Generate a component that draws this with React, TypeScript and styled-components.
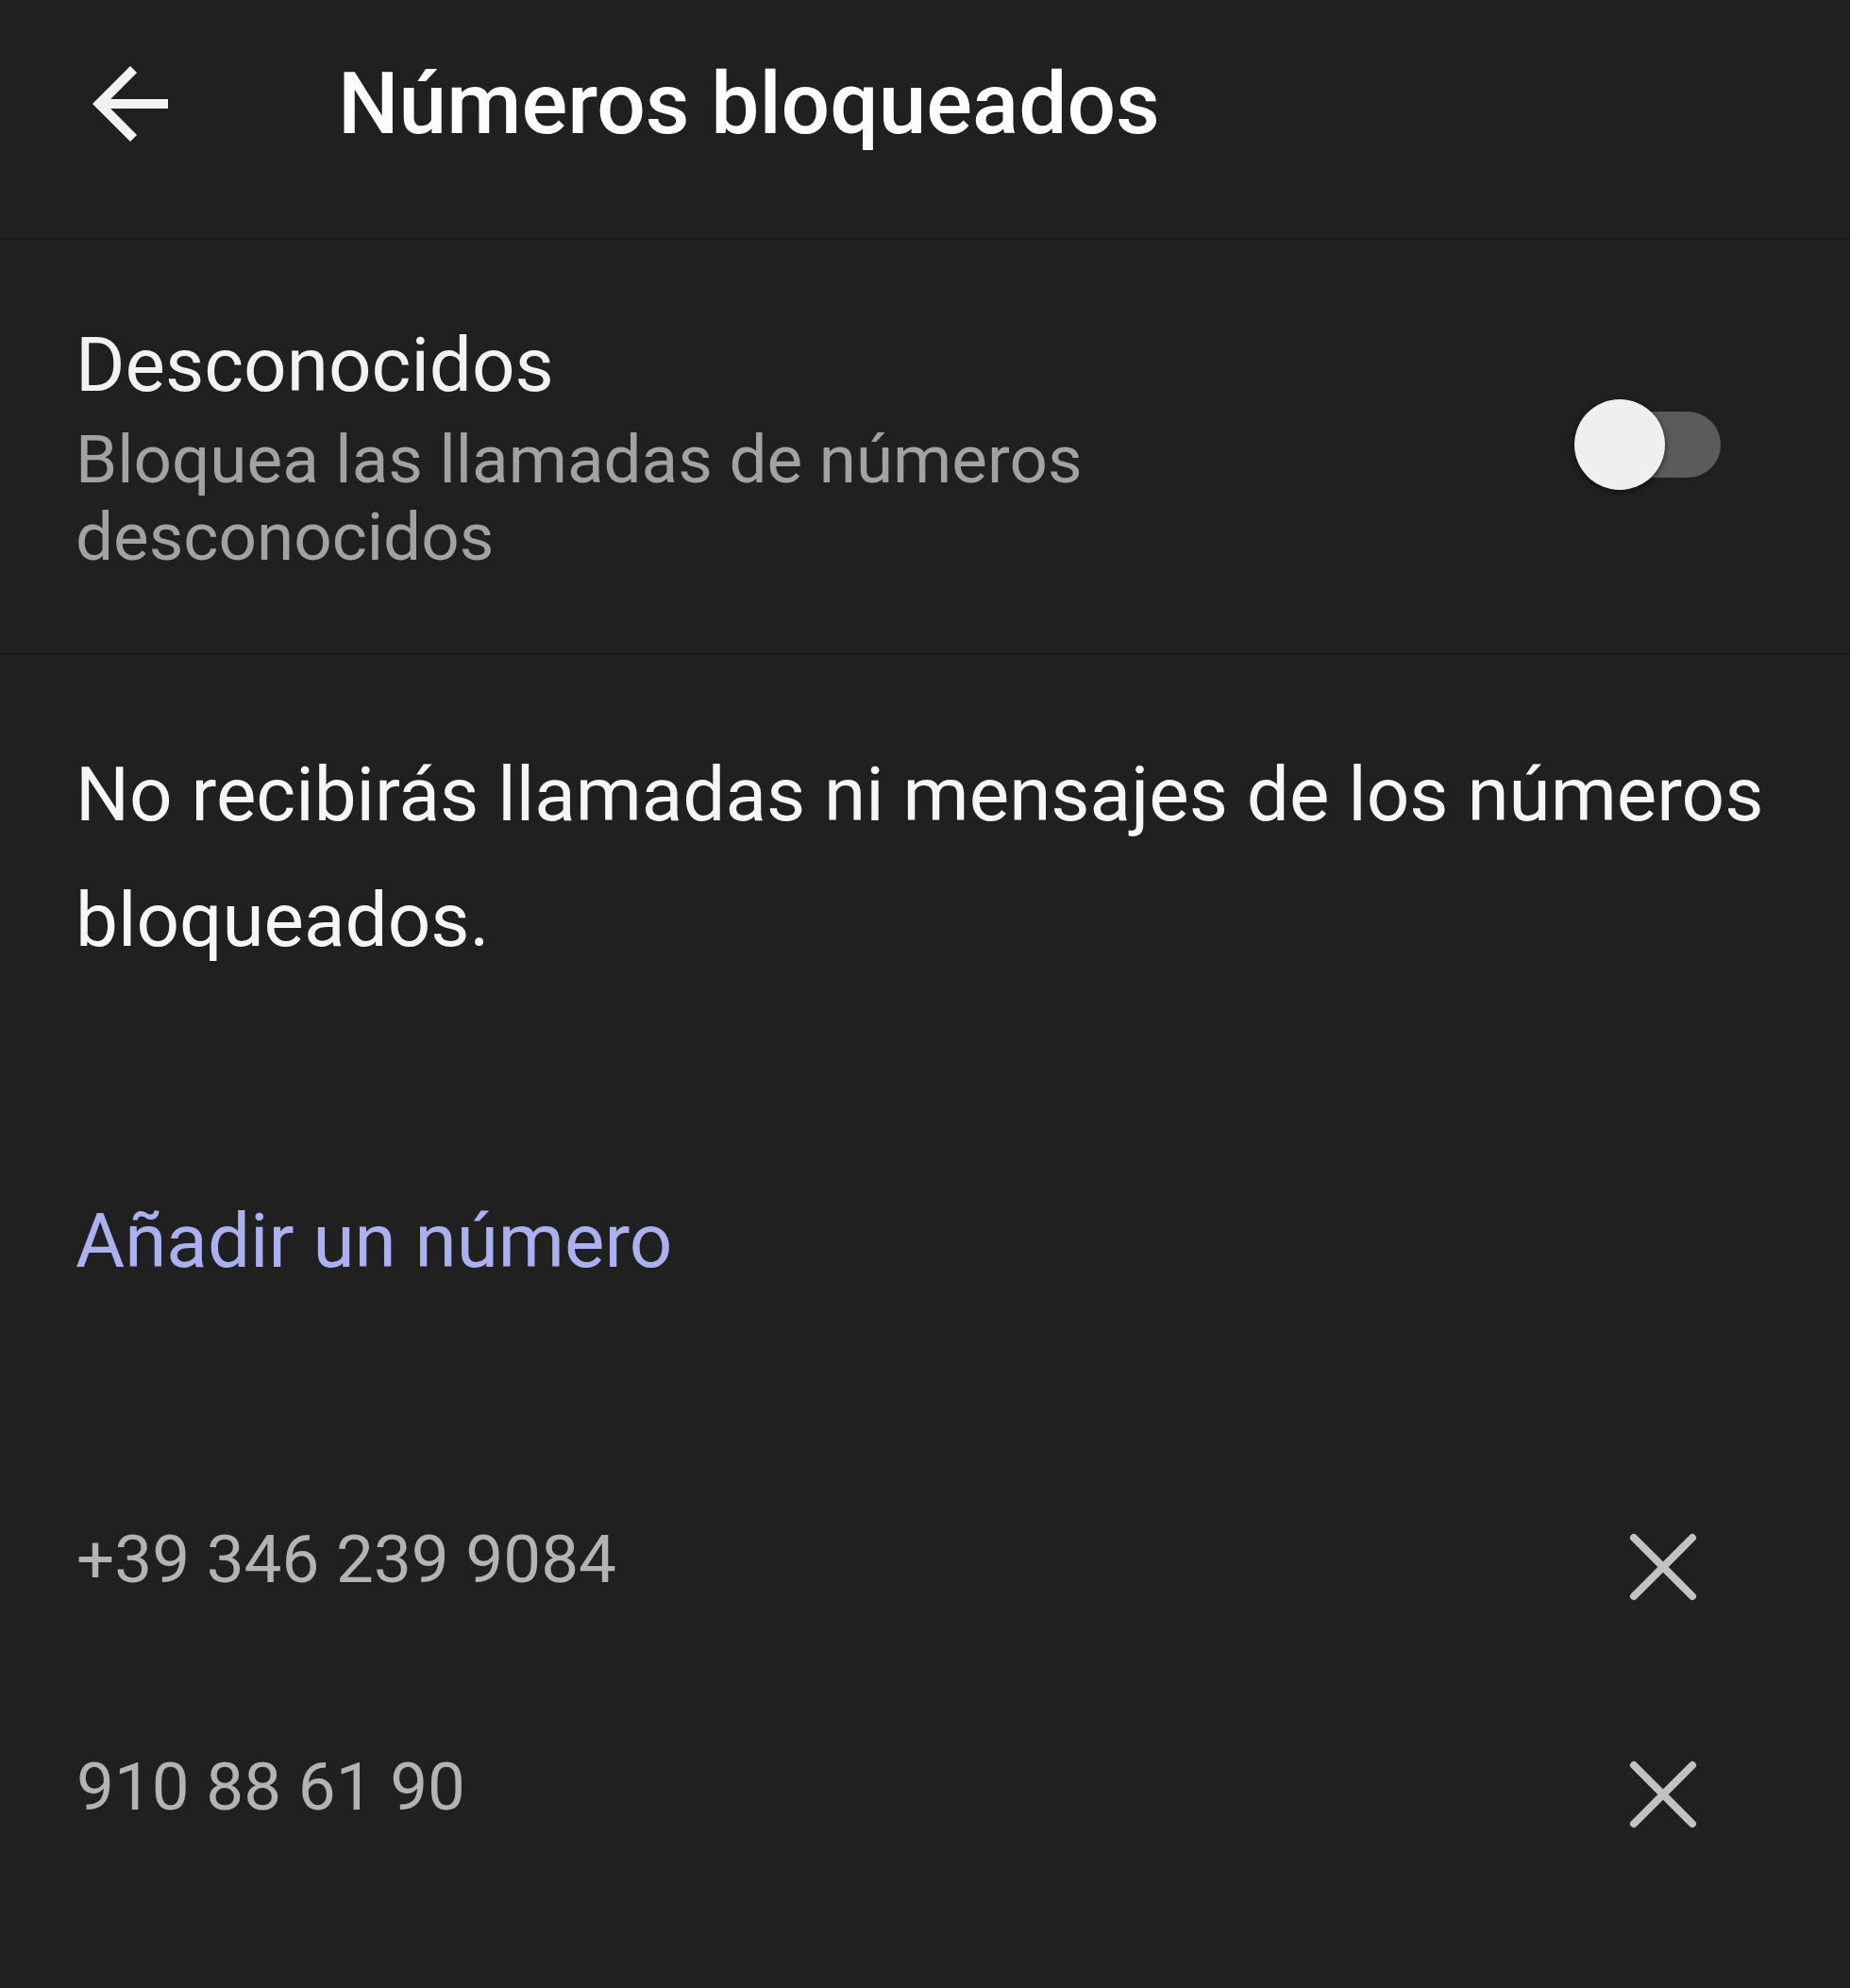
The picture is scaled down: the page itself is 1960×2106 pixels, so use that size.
import React from 'react';
import styled, { createGlobalStyle } from 'styled-components';

const GlobalStyle = createGlobalStyle`
    html, body {
        margin: 0;
        padding: 0;
        background: #202020;
    }
    body {
        font-family: Roboto, 'Liberation Sans', sans-serif;
        -webkit-font-smoothing: antialiased;
    }
`;

const blockedNumbers = ['+39 346 239 9084', '910 88 61 90'];

const Screen = styled.div`
    min-height: 2106px;
    background: #202020;
    color: #f4f4f4;
`;

const Header = styled.header`
    display: flex;
    align-items: center;
    height: 220px;
    padding: 0 0 32px 78px;
    border-bottom: 2px solid #1b1b1b;
`;

const IconButton = styled.button`
    display: flex;
    align-items: center;
    justify-content: center;
    width: 120px;
    height: 120px;
    padding: 0;
    border: none;
    background: transparent;
    color: #f2f2f2;
    cursor: pointer;
`;

const Title = styled.h1`
    margin: 0 0 0 160px;
    font-size: 91px;
    font-weight: 500;
    line-height: 1;
    color: #ffffff;
`;

const SwitchRow = styled.section`
    display: flex;
    align-items: center;
    justify-content: space-between;
    padding: 86px 137px 82px 80px;
    border-bottom: 2px solid #1b1b1b;
`;

const TextBlock = styled.div`
    max-width: 1200px;
`;

const RowTitle = styled.div`
    font-size: 80px;
    line-height: 94px;
    color: #f2f2f2;
    margin-bottom: 12px;
`;

const RowSummary = styled.div`
    font-size: 71px;
    line-height: 82px;
    color: #a2a2a2;
`;

const Switch = styled.div<{ $on: boolean }>`
    position: relative;
    width: 155px;
    height: 100px;
    flex-shrink: 0;
    margin-bottom: 8px;
`;

const Track = styled.span<{ $on: boolean }>`
    position: absolute;
    right: 0;
    top: 15px;
    width: 142px;
    height: 70px;
    border-radius: 35px;
    background: ${(p) => (p.$on ? '#8e95e8' : '#5b5b5b')};
`;

const Thumb = styled.span<{ $on: boolean }>`
    position: absolute;
    top: 2px;
    left: ${(p) => (p.$on ? '59px' : '0')};
    width: 96px;
    height: 96px;
    border-radius: 50%;
    background: #efefef;
    box-shadow: 0 2px 6px rgba(0, 0, 0, 0.55);
`;

const Notice = styled.p`
    margin: 0;
    padding: 82px 36px 0 80px;
    font-size: 80px;
    line-height: 133px;
    color: #f6f6f6;
`;

const AddLink = styled.a`
    display: block;
    margin: 226px 0 0 80px;
    font-size: 80px;
    line-height: 94px;
    color: #abb0f1;
    text-decoration: none;
    cursor: pointer;
`;

const NumberList = styled.ul`
    list-style: none;
    margin: 169px 0 0;
    padding: 0;
`;

const NumberRow = styled.li`
    display: flex;
    align-items: center;
    justify-content: space-between;
    height: 241px;
    padding: 0 138px 0 81px;
`;

const NumberText = styled.span`
    font-size: 71px;
    line-height: 82px;
    color: #b3b3b3;
`;

const RemoveButton = styled(IconButton)`
    margin-top: 16px;
    color: #c2c2c2;
`;

const BackIcon = () => (
    <svg width="120" height="120" viewBox="0 0 24 24" fill="currentColor">
        <path d="M20 11H7.83l5.59-5.59L12 4l-8 8 8 8 1.41-1.41L7.83 13H20v-2z" />
    </svg>
);

const CloseIcon = () => (
    <svg width="120" height="120" viewBox="0 0 24 24" fill="none" stroke="currentColor" strokeWidth="1.6" strokeLinecap="round">
        <path d="M5.8 5.8l12.4 12.4M18.2 5.8L5.8 18.2" />
    </svg>
);

export default function App() {
    const unknownBlocked = false;

    return (
        <Screen>
            <GlobalStyle />
            <Header>
                <IconButton aria-label="Atrás">
                    <BackIcon />
                </IconButton>
                <Title>Números bloqueados</Title>
            </Header>

            <SwitchRow>
                <TextBlock>
                    <RowTitle>Desconocidos</RowTitle>
                    <RowSummary>Bloquea las llamadas de números desconocidos</RowSummary>
                </TextBlock>
                <Switch $on={unknownBlocked} role="switch" aria-checked={unknownBlocked}>
                    <Track $on={unknownBlocked} />
                    <Thumb $on={unknownBlocked} />
                </Switch>
            </SwitchRow>

            <Notice>No recibirás llamadas ni mensajes de los números bloqueados.</Notice>

            <AddLink>Añadir un número</AddLink>

            <NumberList>
                {blockedNumbers.map((num) => (
                    <NumberRow key={num}>
                        <NumberText>{num}</NumberText>
                        <RemoveButton aria-label={`Quitar ${num}`}>
                            <CloseIcon />
                        </RemoveButton>
                    </NumberRow>
                ))}
            </NumberList>
        </Screen>
    );
}
